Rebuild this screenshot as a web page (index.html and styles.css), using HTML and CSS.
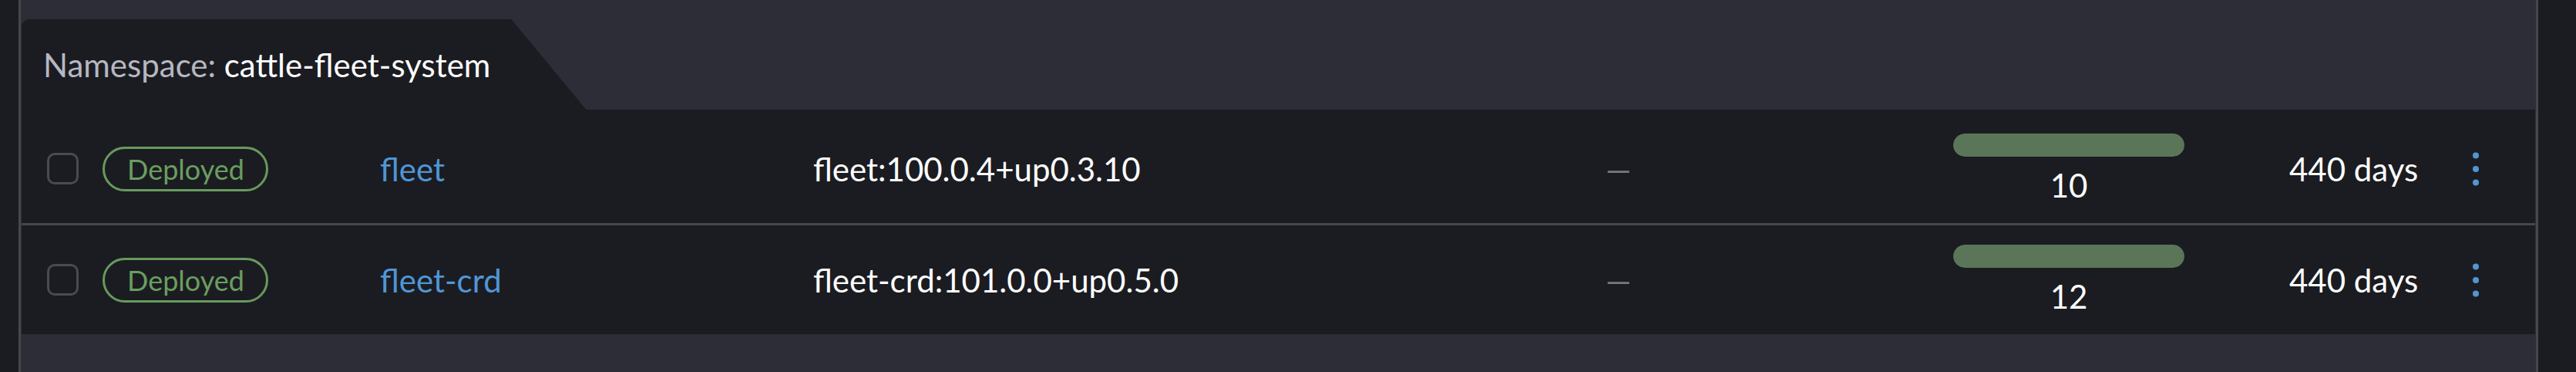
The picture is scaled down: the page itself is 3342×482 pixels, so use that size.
FILE: index.html
```html
<!DOCTYPE html>
<html lang="en">
<head>
<meta charset="utf-8">
<title>Apps</title>
<link rel="stylesheet" href="styles.css">
</head>
<body>
  <div class="side side-left"></div>
  <main class="main">
    <div class="group-head">
      <div class="group-tab">
        <span class="group-label">Namespace:</span>&nbsp;<span class="group-value">cattle-fleet-system</span>
      </div>
    </div>
    <div class="rows">
      <div class="row">
        <div class="cell cell-check"><span class="checkbox"></span></div>
        <div class="cell cell-state"><span class="badge">Deployed</span></div>
        <div class="cell cell-name"><a class="link" href="#">fleet</a></div>
        <div class="cell cell-chart">fleet:100.0.4+up0.3.10</div>
        <div class="cell cell-dash"><span class="dash">—</span></div>
        <div class="cell cell-progress">
          <div class="progress"><div class="progress-fill" style="width:100%"></div></div>
          <div class="progress-count">10</div>
        </div>
        <div class="cell cell-age">440 days</div>
        <div class="cell cell-actions">
          <svg class="kebab" viewBox="0 0 8 44" width="8" height="44" aria-hidden="true">
            <circle cx="4" cy="4.5" r="4"/>
            <circle cx="4" cy="22" r="4"/>
            <circle cx="4" cy="39.5" r="4"/>
          </svg>
        </div>
      </div>
      <div class="row">
        <div class="cell cell-check"><span class="checkbox"></span></div>
        <div class="cell cell-state"><span class="badge">Deployed</span></div>
        <div class="cell cell-name"><a class="link" href="#">fleet-crd</a></div>
        <div class="cell cell-chart">fleet-crd:101.0.0+up0.5.0</div>
        <div class="cell cell-dash"><span class="dash">—</span></div>
        <div class="cell cell-progress">
          <div class="progress"><div class="progress-fill" style="width:100%"></div></div>
          <div class="progress-count">12</div>
        </div>
        <div class="cell cell-age">440 days</div>
        <div class="cell cell-actions">
          <svg class="kebab" viewBox="0 0 8 44" width="8" height="44" aria-hidden="true">
            <circle cx="4" cy="4.5" r="4"/>
            <circle cx="4" cy="22" r="4"/>
            <circle cx="4" cy="39.5" r="4"/>
          </svg>
        </div>
      </div>
    </div>
  </main>
  <div class="side side-right"></div>
</body>
</html>
```
FILE: styles.css
```css
* {
  box-sizing: border-box;
}

html, body {
  margin: 0;
  padding: 0;
}

body {
  display: flex;
  width: 3342px;
  height: 482px;
  overflow: hidden;
  background: #1b1c21;
  font-family: Lato, "Noto Sans", "Liberation Sans", sans-serif;
  font-size: 42px;
  color: #ffffff;
}

.side-left {
  width: 24px;
  flex: none;
}

.side-right {
  width: 49px;
  flex: none;
}

.main {
  flex: 1;
  background: #2c2d36;
  border-left: 3px solid #46474e;
  border-right: 3px solid #46474e;
  padding: 25px 1px 0 1px;
}

.group-head {
  display: flex;
}

.group-tab {
  height: 117px;
  display: flex;
  align-items: center;
  padding: 0 124px 0 28px;
  background: #1b1c21;
  border-top-left-radius: 10px;
  clip-path: polygon(0 0, calc(100% - 97px) 0, 100% 100%, 0 100%);
  white-space: nowrap;
}

.group-label {
  color: #b6b7c2;
}

.group-value {
  color: #ffffff;
}

.rows {
  background: #1b1c21;
  padding-top: 6px;
}

.row {
  display: grid;
  grid-template-columns: 105px 360px 562px 1028px 451px 436px 220px 1fr;
  align-items: center;
  height: 141px;
}

.row + .row {
  border-top: 3px solid #46474e;
  height: 144px;
}

.cell {
  display: flex;
  align-items: center;
  white-space: nowrap;
}

.cell-check {
  padding-left: 33px;
}

.checkbox {
  width: 41px;
  height: 41px;
  border: 3px solid #4a4b52;
  border-radius: 10px;
}

.badge {
  display: inline-flex;
  align-items: center;
  height: 58px;
  padding: 0 28px 0 29px;
  border: 3px solid #679a5d;
  border-radius: 29px;
  color: #6a9e60;
  font-size: 36px;
}

.link {
  color: #5096d6;
  text-decoration: none;
}

.dash {
  color: #77787e;
}

.cell-progress {
  flex-direction: column;
  align-items: center;
  width: 300px;
}

.progress {
  width: 300px;
  height: 30px;
  border-radius: 15px;
  background: #2d3a2e;
  overflow: hidden;
}

.progress-fill {
  height: 100%;
  background: #5b7559;
  border-radius: 15px;
}

.progress-count {
  margin-top: 12px;
  line-height: normal;
}

.cell-actions {
  padding-left: 18px;
}

.kebab {
  fill: #5096d6;
}
```
